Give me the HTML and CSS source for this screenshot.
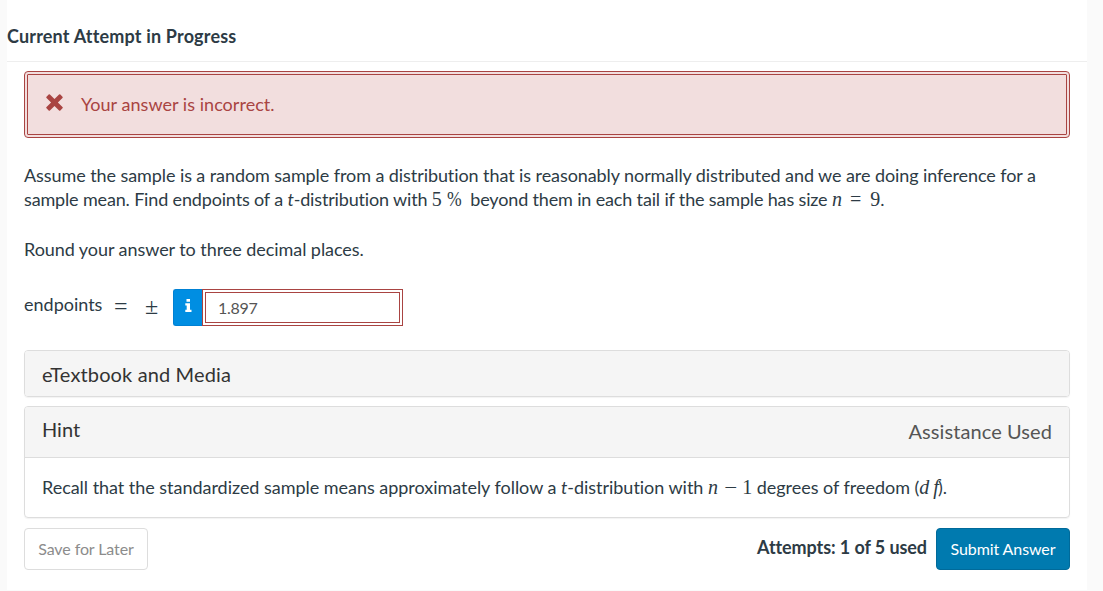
FILE: index.html
```
<!doctype html>
<html lang="en">
<head>
<meta charset="utf-8">
<title>Current Attempt in Progress</title>
<link rel="stylesheet" href="styles.css">
</head>
<body>
<div id="content">
	<h1>Current Attempt in Progress</h1>
	<div class="question">
		<div class="alert">
			<svg class="cross" viewBox="0 0 16 16"><path d="M3.7 0.5 8 4.8l4.3-4.3q.6-.6 1.2 0l2 2q.6.6 0 1.2L11.200 8l4.300 4.300q.6.6 0 1.200l-2 2q-.6.6-1.200 0L8 11.200l-4.300 4.300q-.6.6-1.200 0l-2-2q-.6-.6 0-1.200L4.800 8 .5 3.700q-.6-.6 0-1.200l2-2q.6-.6 1.200 0z"/></svg>
			<span>Your answer is incorrect.</span>
		</div>
		<p class="intro"><span class="line">Assume the sample is a random sample from a distribution that is reasonably normally distributed and we are doing inference for a</span>
		<span class="line tight">sample mean. Find endpoints of a <i>t</i>-distribution with <span class="math">5 <span class="percent">%</span></span><span class="gap"></span> beyond them in each tail if the sample has size <span class="math"><i>n</i><span class="op">=</span>9</span>.</span></p>
		<p class="round">Round your answer to three decimal places.</p>
		<div class="answer">
			<label for="endpoints">endpoints</label>
			<span class="sign equals">=</span>
			<span class="sign">±</span>
			<button class="info" type="button" aria-label="Info">
				<svg viewBox="0 0 7 13"><path d="M1.500 0h3.500v2.800H1.500zM.3 4.300H5v6.500h1.500V13H.3v-2.200h1.400V6.500H.3z"/></svg>
			</button>
			<input id="endpoints" type="text" value="1.897">
		</div>
		<div class="panel">
			<div class="panel-head book">eTextbook and Media</div>
		</div>
		<div class="panel">
			<div class="panel-head hint"><span>Hint</span><span class="used">Assistance Used</span></div>
			<div class="panel-body">Recall that the standardized sample means approximately follow a <i>t</i>-distribution with <span class="math"><i>n</i><span class="op minus">−</span>1</span> degrees of freedom (<span class="math"><i class="d">d</i><i class="f">f</i></span>).</div>
		</div>
		<div class="footer">
			<button class="save" type="button">Save for Later</button>
			<span class="attempts">Attempts: 1 of 5 used</span>
			<button class="submit" type="button">Submit Answer</button>
		</div>
	</div>
</div>
</body>
</html>
```
FILE: styles.css
```
* {
	box-sizing: border-box;
}
body {
	margin: 0;
	background-color: #fafafa;
	font: 18px/24px Lato, sans-serif;
	font-variant-ligatures: none;
	color: #2d3b45;
	overflow: hidden;
}
#content {
	width: 1080px;
	height: 590px;
	margin-left: 7px;
	background-color: white;
}
h1 {
	height: 62px;
	margin: 0;
	padding-top: 24px;
	border-bottom: 1px solid #eee;
	font-size: 18px;
	line-height: 24px;
	font-weight: bold;
	letter-spacing: .18px;
}
p {
	margin: 0;
}
button {
	font-family: inherit;
}
.question {
	padding: 9px 17px 0;
}
.alert {
	display: flex;
	align-items: center;
	height: 67px;
	padding: 0 18px 2px;
	border: 4px double #a94442;
	border-radius: 4px;
	background-color: #f2dede;
	color: #a94442;
	letter-spacing: .04px;
}
.cross {
	width: 17px;
	height: 17px;
	margin: 0 18px 3px 0;
	fill: #a94442;
}
.intro {
	margin-top: 25px;
}
.line {
	display: block;
	height: 24px;
	white-space: nowrap;
	letter-spacing: -.08px;
}
.tight {
	letter-spacing: -.155px;
}
.math {
	font-family: "Liberation Serif", serif;
	font-size: 20px;
	line-height: 1;
	letter-spacing: 0;
}
.percent {
	display: inline-block;
	width: 15px;
	transform: scaleX(.88);
	transform-origin: left;
}
.gap {
	padding-left: 4px;
}
.op {
	margin: 0 8px;
}
.tight .op {
	margin-right: 9px;
}
.op.minus {
	display: inline-block;
	margin: 0 6px 0 7px;
	transform: scaleX(1.15);
}
.d {
	margin-right: 4px;
}
.f {
	margin-right: -1px;
}
.round {
	margin-top: 26px;
	letter-spacing: -.06px;
}
.answer {
	display: flex;
	height: 37px;
	margin-top: 28px;
}
.answer label {
	width: 90px;
	padding-top: 3px;
}
.sign {
	width: 31px;
	padding-top: 5px;
	font: 24px/24px "Liberation Serif", serif;
}
.sign + .sign {
	width: 28px;
}
.info {
	width: 29px;
	padding: 0;
	border: 1px solid #0081d4;
	border-right: 0;
	border-radius: 3px 0 0 3px;
	background-color: #008ee2;
}
.info svg {
	display: block;
	width: 7px;
	height: 13px;
	margin: 0 auto 4px;
	fill: white;
}
.answer input {
	width: 201px;
	padding: 0 12px;
	border: 4px double #a94442;
	font: 16px Lato, sans-serif;
	letter-spacing: -.3px;
	color: #555;
}
.panel {
	margin-top: 24px;
	border: 1px solid #ddd;
	border-radius: 4px;
	box-shadow: 0 1px 1px rgba(0, 0, 0, .05);
	overflow: hidden;
}
.panel + .panel {
	margin-top: 9px;
}
.panel-head {
	padding: 0 17px;
	background-color: #f5f5f5;
	color: #333;
	font-size: 20px;
}
.book {
	height: 45px;
	line-height: 46px;
	letter-spacing: .13px;
}
.hint {
	display: flex;
	justify-content: space-between;
	height: 51px;
	border-bottom: 1px solid #ddd;
	line-height: 44px;
}
.used {
	padding-top: 2px;
	color: #555;
	letter-spacing: .08px;
}
.panel-body {
	height: 59px;
	padding: 17px;
	white-space: nowrap;
	letter-spacing: -.03px;
}
.footer {
	display: flex;
	margin-top: 10px;
}
.save, .submit {
	height: 42px;
	padding: 0 0 2px;
	border: 1px solid #ddd;
	border-radius: 4px;
	font-size: 16px;
}
.save {
	width: 124px;
	background-color: white;
	color: #8c8c8c;
	letter-spacing: -.1px;
}
.submit {
	width: 134px;
	border-color: #006a9a;
	background-color: #007aaf;
	color: white;
	letter-spacing: -.1px;
}
.attempts {
	margin: 7px 9px 0 auto;
	font-weight: bold;
	letter-spacing: -.09px;
}
```
